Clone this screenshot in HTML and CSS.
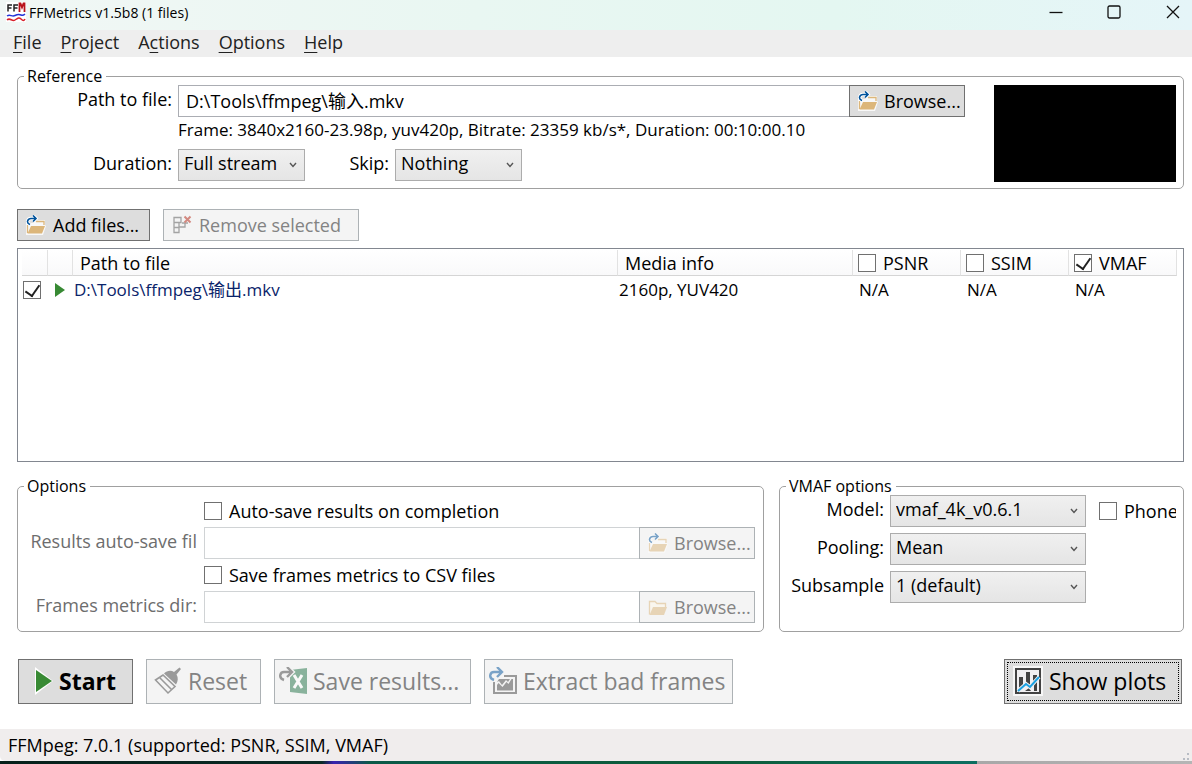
FILE: index.html
```html
<!DOCTYPE html>
<html lang="en">
<head>
    <meta charset="UTF-8">
    <title>FFMetrics</title>
    <link rel="stylesheet" href="styles.css">
</head>
<body>
    <!-- shared icons -->
    <svg class="sprite" aria-hidden="true">
        <symbol id="folder" viewBox="0 0 20 20">
            <path d="M1.5 17.5V4.5H7l2 2h8.500v4" fill="#fff8ea" stroke="#dcb67a" stroke-width="1.3"/>
            <path d="M1.5 18L5 10h14l-3 8z" fill="#dcb67a"/>
        </symbol>
        <symbol id="folder-open" viewBox="0 0 20 20">
            <path d="M0 8h7L12 5h7v5l1 1-3 9H0z" fill="#fff" opacity=".8"/>
            <path d="M1.5 18V10M10 6.5h8V10" fill="none" stroke="#dcb67a" stroke-width="1.3"/>
            <path d="M1.5 18.5L5 11h14l-3 7.5z" fill="#dcb67a"/>
            <path d="M4 9.500C-.5 7.500 2 3.500 5 3.500h5M7 .5l3 3-3 3" fill="none" stroke="#fff" stroke-width="3.500"/>
            <path d="M4 9.500C-.5 7.500 2 3.500 5 3.500h5M7 .5l3 3-3 3" fill="none" stroke="#00539c" stroke-width="1.600"/>
        </symbol>
        <symbol id="chevron" viewBox="0 0 8 6">
            <path d="M1 1l3 3.500L7 1" fill="none" stroke="#555" stroke-width="1.400"/>
        </symbol>
    </svg>

    <header class="titlebar">
        <svg class="logo" viewBox="0 0 20 20">
            <rect width="20" height="20" fill="#fff"/>
            <path d="M2 9.500V3h4M2 6h3.500M8 9.500V3h4M8 6h3.500" fill="none" stroke="#222" stroke-width="1.500"/>
            <path d="M13.500 10V1.500h1l1.500 4 1.500-4h1V10" fill="none" stroke="#b8121b" stroke-width="1.800"/>
            <path d="M1 14c3-2 5 1 8-.5s4-1.500 6-.5 3 0 4-1" fill="none" stroke="#2434d8" stroke-width="1.500"/>
            <path d="M1 18c3-3 5 2 8 0s4-3 6-1 3 2 4 0" fill="none" stroke="#d8202a" stroke-width="1.500"/>
        </svg>
        <h1>FFMetrics v1.5b8 (1 files)</h1>
        <div class="window-buttons">
            <button type="button" aria-label="Minimize"><svg viewBox="0 0 14 14"><path d="M.5 7.500h13"/></svg></button>
            <button type="button" aria-label="Maximize"><svg viewBox="0 0 14 14"><rect x="1" y="1" width="12" height="12" rx="1.500"/></svg></button>
            <button type="button" aria-label="Close"><svg viewBox="0 0 14 14"><path d="M1 1l12 12M13 1L1 13"/></svg></button>
        </div>
    </header>

    <nav class="menu">
        <a href="#"><u>F</u>ile</a>
        <a href="#"><u>P</u>roject</a>
        <a href="#">A<u>c</u>tions</a>
        <a href="#"><u>O</u>ptions</a>
        <a href="#"><u>H</u>elp</a>
    </nav>

    <main>
        <fieldset class="reference">
            <legend>Reference</legend>
            <div class="reference-body">
                <div class="reference-form">
                    <label for="refPath">Path to file:</label>
                    <div class="path-field">
                        <input type="text" id="refPath" value="D:\Tools\ffmpeg\输入.mkv">
                        <button type="button"><svg class="icon"><use href="#folder-open"/></svg>Browse...</button>
                    </div>
                    <p class="frame-info">Frame: 3840x2160-23.98p, yuv420p, Bitrate: 23359 kb/s*, Duration: 00:10:00.10</p>
                    <label for="duration">Duration:</label>
                    <div class="range">
                        <div class="select">
                            <select id="duration"><option>Full stream</option></select>
                            <svg><use href="#chevron"/></svg>
                        </div>
                        <label for="skip">Skip:</label>
                        <div class="select">
                            <select id="skip"><option>Nothing</option></select>
                            <svg><use href="#chevron"/></svg>
                        </div>
                    </div>
                </div>
                <div class="preview"></div>
            </div>
        </fieldset>

        <div class="file-actions">
            <button type="button"><svg class="icon"><use href="#folder-open"/></svg>Add files...</button>
            <button type="button" class="remove" disabled>
                <svg class="icon" viewBox="0 0 20 20">
                    <path d="M2 2.500h7v5H2zM2 7.500h5v5H2zM2 12.500h5v5H2zM7 12h6V8M10 8h6" fill="none" stroke="#555" stroke-width="1.300"/>
                    <path d="M12.500 1.500l6 6M18.500 1.500l-6 6" stroke="#b3200e" stroke-width="2"/>
                </svg>Remove selected
            </button>
        </div>

        <div class="file-list">
            <table>
                <colgroup>
                    <col class="col-check"><col class="col-state"><col><col class="col-info">
                    <col class="col-metric"><col class="col-metric"><col class="col-metric">
                </colgroup>
                <thead>
                    <tr>
                        <th></th>
                        <th></th>
                        <th>Path to file</th>
                        <th>Media info</th>
                        <th><label class="check"><input type="checkbox">PSNR</label></th>
                        <th><label class="check"><input type="checkbox">SSIM</label></th>
                        <th><label class="check"><input type="checkbox" checked>VMAF</label></th>
                    </tr>
                </thead>
                <tbody>
                    <tr>
                        <td><input type="checkbox" aria-label="Use file" checked></td>
                        <td><svg class="state" viewBox="0 0 12 14"><path d="M1 0l10 7-10 7z" fill="#388a34"/></svg></td>
                        <td class="path">D:\Tools\ffmpeg\输出.mkv</td>
                        <td>2160p, YUV420</td>
                        <td class="metric">N/A</td>
                        <td class="metric">N/A</td>
                        <td class="metric">N/A</td>
                    </tr>
                </tbody>
            </table>
        </div>

        <div class="settings">
            <fieldset>
                <legend>Options</legend>
                <div class="options-form">
                    <label class="check"><input type="checkbox">Auto-save results on completion</label>
                    <label class="off" for="resultsFile">Results auto-save fil</label>
                    <div class="path-field">
                        <input type="text" id="resultsFile" disabled>
                        <button type="button" disabled><svg class="icon"><use href="#folder-open"/></svg>Browse...</button>
                    </div>
                    <label class="check"><input type="checkbox">Save frames metrics to CSV files</label>
                    <label class="off" for="framesDir">Frames metrics dir:</label>
                    <div class="path-field">
                        <input type="text" id="framesDir" disabled>
                        <button type="button" disabled><svg class="icon"><use href="#folder"/></svg>Browse...</button>
                    </div>
                </div>
            </fieldset>

            <fieldset>
                <legend>VMAF options</legend>
                <div class="vmaf-form">
                    <label for="model">Model:</label>
                    <div class="select">
                        <select id="model"><option>vmaf_4k_v0.6.1</option></select>
                        <svg><use href="#chevron"/></svg>
                    </div>
                    <label class="check phone"><input type="checkbox">Phone</label>
                    <label for="pooling">Pooling:</label>
                    <div class="select">
                        <select id="pooling"><option>Mean</option></select>
                        <svg><use href="#chevron"/></svg>
                    </div>
                    <label for="subsample">Subsample</label>
                    <div class="select">
                        <select id="subsample"><option>1 (default)</option></select>
                        <svg><use href="#chevron"/></svg>
                    </div>
                </div>
            </fieldset>
        </div>

        <div class="run-bar">
            <button type="button" class="start">
                <svg class="icon" viewBox="0 0 28 28"><path d="M5 0v28l18-14z" fill="#fff"/><path d="M6 3v22l16-11z" fill="#388a34"/></svg>Start
            </button>
            <button type="button" class="reset" disabled>
                <svg class="icon" viewBox="0 0 28 28">
                    <path d="M1.500 13L9 8l12 11.500-7 6.500zM5.500 10.500L17.500 22.500" fill="none" stroke="#424242" stroke-width="1.600"/>
                    <path d="M10 6.500c3-3 7-3.500 10-1.500L25.500.500l1.500 1.500L22.500 7.500c2 3 1.500 7-.500 10z" fill="#424242"/>
                </svg>Reset
            </button>
            <button type="button" class="save" disabled>
                <svg class="icon" viewBox="0 0 28 28">
                    <path d="M11 3l17-2v26l-17-2z" fill="#217346"/>
                    <path d="M15 8l8 13M23 8l-8 13" stroke="#fff" stroke-width="3"/>
                    <path d="M5 13C-1 11 1 5 5 5h8M8 0l5 5-5 5" fill="none" stroke="#f4f4f4" stroke-width="5"/>
                    <path d="M5 13C-1 11 1 5 5 5h8M8 0l5 5-5 5" fill="none" stroke="#424242" stroke-width="2.400"/>
                </svg>Save results...
            </button>
            <button type="button" class="extract" disabled>
                <svg class="icon" viewBox="0 0 28 28">
                    <path d="M15 9h12v17H5V15" fill="none" stroke="#424242" stroke-width="2"/>
                    <path d="M8 23.500V18l1.500-2 4 4 4-5 2 2 3-5H24v11.500zM8 15l2-3h11l-2 3-2-2-4 5-3-4z" fill="#424242"/>
                    <path d="M5 13C-1 11 1 5 5 5h8M8 0l5 5-5 5" fill="none" stroke="#f4f4f4" stroke-width="5"/>
                    <path d="M5 13C-1 11 1 5 5 5h8M8 0l5 5-5 5" fill="none" stroke="#00539c" stroke-width="2.400"/>
                </svg>Extract bad frames
            </button>
            <button type="button" class="plots">
                <svg class="icon" viewBox="0 0 30 30">
                    <rect width="30" height="30" fill="#f6f6f6"/>
                    <rect x="3" y="3" width="24" height="24" fill="#f0eff1" stroke="#424242" stroke-width="2"/>
                    <path d="M6 11h4v9l-4 4zM13 6h4v13l-4-3zM20 9h4v3l-4 4zM12 25l4-3 2 3zM21 18l3-3v10h-3z" fill="#424242"/>
                    <path d="M5 25l8-7 4 3 9-10" fill="none" stroke="#f0eff1" stroke-width="4"/>
                    <path d="M5 25l8-7 4 3 9-10" fill="none" stroke="#1ba1e2" stroke-width="2"/>
                </svg>Show plots
            </button>
        </div>
    </main>

    <footer class="statusbar">
        <span>FFMpeg: 7.0.1 (supported: PSNR, SSIM, VMAF)</span>
        <svg class="grip" viewBox="0 0 8 8"><path d="M5 0h2v2H5zM1 5h2v2H1zM5 5h2v2H5z" fill="#b8bcc4"/></svg>
    </footer>
    <div class="desktop-edge"></div>
</body>
</html>
```
FILE: styles.css
```css
* {
    box-sizing: border-box;
}
body {
    margin: 0;
    min-height: 100vh;
    display: flex;
    flex-direction: column;
    background: #fff;
    color: #000;
    font-family: "Open Sans", "Noto Sans CJK SC", sans-serif;
    font-size: 18px;
    line-height: 24px;
}
button, input, select {
    font: inherit;
    color: inherit;
    margin: 0;
}
.sprite {
    display: none;
}

/* title bar and menu */
.titlebar {
    display: flex;
    align-items: center;
    height: 30px;
    padding-left: 6px;
    background: linear-gradient(to right, #f1f7f5, #e9f7f2 40%, #e4f7f1 70%, #e5f5f8);
}
.logo {
    width: 20px;
    height: 20px;
    margin-bottom: 6px;
}
.titlebar h1 {
    margin: 0 0 4px 3px;
    font-size: 14px;
    font-weight: 400;
    line-height: 20px;
}
.window-buttons {
    display: flex;
    margin-left: auto;
    margin-bottom: 7px;
}
.window-buttons button {
    width: 58px;
    height: 22px;
    padding: 0;
    border: none;
    background: none;
    display: flex;
    align-items: center;
    justify-content: center;
}
.window-buttons button:last-child {
    width: 49px;
    padding-left: 11px;
}
.window-buttons svg {
    width: 14px;
    height: 14px;
    fill: none;
    stroke: #111;
    stroke-width: 1.3;
}
.menu {
    display: flex;
    gap: 19px;
    height: 27px;
    padding-left: 13px;
    background: #eee;
}
.menu a {
    color: #222;
    text-decoration: none;
}
.menu u {
    text-underline-offset: 3px;
}

main {
    flex: 1;
    display: flex;
    flex-direction: column;
    padding: 10px 8px 25px 17px;
}
fieldset {
    min-width: 0;
    margin: 0;
    padding: 0 7px 8px;
    border: 1px solid #a0a0a0;
    border-radius: 5px;
}
legend {
    margin-left: -1px;
    padding: 0 4px 0 3px;
    font-size: 16px;
    line-height: 18px;
}

/* controls */
button {
    display: flex;
    align-items: center;
    border: 1px solid #707070;
    background: #ddd;
    white-space: nowrap;
}
button:disabled {
    border-color: #adb2b5;
    background: #f4f4f4;
    color: #838383;
}
.icon {
    flex: none;
    width: 20px;
    height: 20px;
}
button:disabled .icon {
    opacity: 0.5;
}
input[type="text"] {
    flex: 1;
    min-width: 0;
    height: 32px;
    padding: 0 7px 2px;
    border: 1px solid #abadb3;
    background: #fff;
}
input[type="text"]:disabled {
    border-color: #d0d3d5;
}
.path-field {
    display: flex;
}
.path-field button {
    width: 116px;
    padding: 0 0 0 8px;
    gap: 6px;
    margin-left: -1px;
}
.select {
    display: grid;
    align-items: center;
}
.select select, .select svg {
    grid-area: 1 / 1;
}
.select select {
    appearance: none;
    width: 100%;
    height: 32px;
    padding: 0 5px 4px;
    border: 1px solid #acacac;
    border-radius: 0;
    background: linear-gradient(#f0f0f0, #e5e5e5);
}
.select svg {
    justify-self: end;
    width: 8px;
    height: 6px;
    margin-right: 8px;
    pointer-events: none;
}
input[type="checkbox"] {
    appearance: none;
    flex: none;
    display: grid;
    place-items: center;
    width: 18px;
    height: 18px;
    border: 1px solid #707070;
    background: #fff;
}
input[type="checkbox"]:checked::after {
    content: "";
    width: 7px;
    height: 12px;
    margin-bottom: 3px;
    border: solid #212121;
    border-width: 0 2px 2px 0;
    transform: rotate(35deg);
}
.check {
    display: flex;
    align-items: center;
    gap: 7px;
    white-space: nowrap;
}

/* reference */
.reference {
    padding-bottom: 6px;
}
.reference-body {
    display: flex;
    gap: 29px;
}
.reference-form {
    flex: 1;
    display: grid;
    grid-template-columns: 147px 1fr;
    column-gap: 6px;
    align-items: center;
    align-content: start;
}
.reference-form label {
    text-align: right;
    padding-bottom: 4px;
}
.frame-info {
    grid-column: 2;
    margin: 0 0 6px;
    font-size: 17px;
    line-height: 26px;
}
.range {
    display: flex;
    align-items: center;
}
.range .select {
    width: 127px;
}
.range label {
    width: 84px;
    margin-right: 6px;
}
.preview {
    width: 182px;
    height: 97px;
    background: #000;
}

/* file list */
.file-actions {
    display: flex;
    gap: 13px;
    margin: 20px 0 7px;
}
.file-actions button {
    height: 32px;
    width: 133px;
    padding: 0 0 0 8px;
    gap: 7px;
}
.file-actions .remove {
    width: 196px;
}
.file-list {
    flex: 1;
    padding: 1px 6px 0 4px;
    border: 1px solid #828790;
}
.file-list table {
    width: 100%;
    table-layout: fixed;
    border-collapse: separate;
    border-spacing: 0;
}
.col-check {
    width: 26px;
}
.col-state {
    width: 25px;
}
.col-info {
    width: 235px;
}
.col-metric {
    width: 108px;
}
.file-list th {
    height: 26px;
    padding: 0 7px;
    border-right: 1px solid #e2e2e2;
    border-bottom: 1px solid #d5d5d5;
    background: linear-gradient(#fff, #f9f9fa);
    font-weight: 400;
    text-align: left;
}
.file-list th .check {
    margin-left: -2px;
}
.file-list td {
    height: 28px;
    padding: 0 1px;
    font-size: 17px;
}
.file-list .path {
    color: #0a246a;
}
.file-list .metric {
    padding-left: 6px;
}
.state {
    display: block;
    width: 12px;
    height: 14px;
    margin-left: 5px;
}

/* options */
.settings {
    display: grid;
    grid-template-columns: 747fr 405fr;
    gap: 15px;
    margin-top: 15px;
}
.options-form {
    display: grid;
    grid-template-columns: 172px 1fr;
    column-gap: 7px;
    grid-auto-rows: 32px;
    align-items: center;
    padding-right: 1px;
}
.options-form .check {
    grid-column: 2;
}
.options-form .off {
    padding: 0 0 4px 1px;
    overflow: hidden;
    color: #6d6d6d;
    text-align: right;
    white-space: nowrap;
}
.vmaf-form {
    display: grid;
    grid-template-columns: 103px 196px 1fr;
    row-gap: 6px;
}
.vmaf-form > label:not(.check) {
    grid-column: 1;
    padding: 2px 6px 0 0;
    text-align: right;
}
.vmaf-form .phone {
    margin-left: 13px;
    overflow: hidden;
}

/* bottom buttons */
.run-bar {
    display: flex;
    gap: 13px;
    margin-top: 27px;
    padding: 0 2px 0 1px;
    font-size: 23px;
}
.run-bar button {
    height: 45px;
    padding: 0 0 2px 4px;
    gap: 6px;
}
.run-bar .icon {
    width: 28px;
    height: 28px;
}
.run-bar .start {
    width: 115px;
    padding-left: 11px;
    gap: 1px;
    font-weight: 700;
}
.run-bar .reset {
    width: 115px;
    padding-left: 7px;
}
.run-bar .save {
    width: 197px;
}
.run-bar .extract {
    width: 249px;
}
.run-bar .plots {
    width: 178px;
    margin-left: auto;
    padding-left: 8px;
    outline: 1px dotted #000;
    outline-offset: -4px;
}
.run-bar .plots .icon {
    width: 30px;
    height: 30px;
}

.statusbar {
    display: flex;
    justify-content: space-between;
    align-items: center;
    height: 32px;
    padding: 0 2px 0 8px;
    background: #f0eded;
    border-radius: 0 0 0 5px;
}
.grip {
    align-self: flex-end;
    width: 8px;
    height: 8px;
}
.desktop-edge {
    height: 3px;
    background: linear-gradient(to right, #06201a, #0a2a24 27%, #3a20b0 28%, #0b5a48 31%, #0c5c38 60%, #0c6e60 82%, #a8a8a8 82%, #b5b5b5);
}
```
